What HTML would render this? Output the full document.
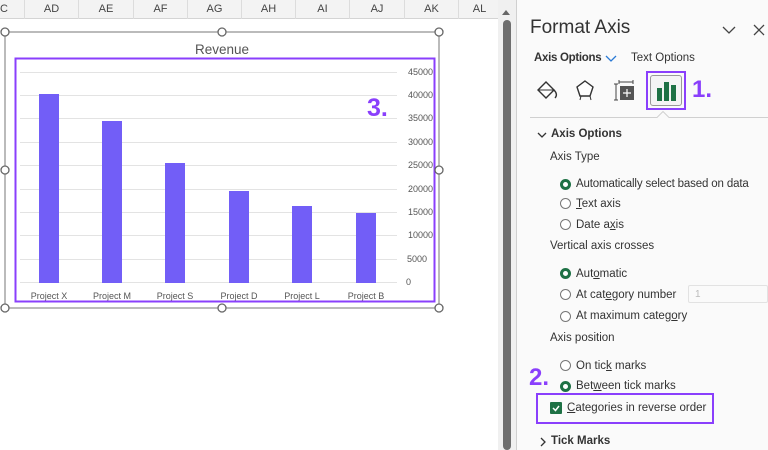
<!DOCTYPE html>
<html><head><meta charset="utf-8"><style>
*{margin:0;padding:0;box-sizing:border-box}
body{width:768px;height:450px;overflow:hidden;background:#fff;font-family:"Liberation Sans",sans-serif;position:relative}
.a{position:absolute}
.hdr{left:0;top:0;width:500px;height:19px;background:#f3f3f3;border-bottom:1px solid #d4d4d4}
.col{position:absolute;top:0;height:19px;font-size:11px;color:#444;text-align:center;line-height:19px;border-right:1px solid #dcdcdc}
.t{font-size:11.5px;color:#333;white-space:nowrap}
.rad{position:absolute;width:11px;height:11px;border-radius:50%;border:1px solid #777;background:#fff}
.rad.on{border:3px solid #1e7145}
.u{text-decoration:underline}
</style></head><body>
<div class="a hdr">
<div class="col" style="left:0;width:25px;text-align:left">C</div>
<div class="col" style="left:25px;width:54px">AD</div>
<div class="col" style="left:79px;width:55px">AE</div>
<div class="col" style="left:134px;width:54px">AF</div>
<div class="col" style="left:188px;width:54px">AG</div>
<div class="col" style="left:242px;width:54px">AH</div>
<div class="col" style="left:296px;width:54px">AI</div>
<div class="col" style="left:350px;width:55px">AJ</div>
<div class="col" style="left:405px;width:54px">AK</div>
<div class="col" style="left:459px;width:41px;border:none">AL</div>
</div>
<svg class="a" style="left:0;top:0" width="500" height="450">
<rect x="5" y="32" width="434" height="276" fill="#fff" stroke="#777" stroke-width="1"/>
<text x="222" y="54" font-size="13.5" fill="#555" text-anchor="middle" font-family="Liberation Sans">Revenue</text>
<g stroke="#e3e3e3" stroke-width="1">
<line x1="20" x2="397" y1="72.5" y2="72.5"/><line x1="20" x2="397" y1="95.5" y2="95.5"/><line x1="20" x2="397" y1="118.5" y2="118.5"/><line x1="20" x2="397" y1="142.5" y2="142.5"/><line x1="20" x2="397" y1="165.5" y2="165.5"/><line x1="20" x2="397" y1="189.5" y2="189.5"/><line x1="20" x2="397" y1="212.5" y2="212.5"/><line x1="20" x2="397" y1="235.5" y2="235.5"/><line x1="20" x2="397" y1="259.5" y2="259.5"/><line x1="20" x2="397" y1="282.5" y2="282.5"/>
</g>
<g fill="#725ef7">
<rect x="39" y="94" width="20" height="189"/><rect x="102" y="121" width="20" height="162"/><rect x="165" y="163" width="20" height="120"/><rect x="229" y="191" width="20" height="92"/><rect x="292" y="206" width="20" height="77"/><rect x="356" y="213" width="20" height="70"/>
</g>
<g font-size="9" fill="#555" font-family="Liberation Sans" text-anchor="end">
<text x="433" y="75">45000</text><text x="433" y="98">40000</text><text x="433" y="121">35000</text><text x="433" y="145">30000</text><text x="433" y="168">25000</text><text x="433" y="192">20000</text><text x="433" y="215">15000</text><text x="433" y="238">10000</text><text x="427" y="262">5000</text><text x="411" y="285">0</text>
</g>
<g font-size="9" fill="#555" font-family="Liberation Sans" text-anchor="middle">
<text x="49" y="299">Project X</text><text x="112" y="299">Project M</text><text x="175" y="299">Project S</text><text x="239" y="299">Project D</text><text x="302" y="299">Project L</text><text x="366" y="299">Project B</text>
</g>
<rect x="15.5" y="58.5" width="419" height="243" fill="none" stroke="#8a3ffc" stroke-width="2"/>
<text x="367" y="116" font-size="25" font-weight="bold" fill="#8a3ffc" font-family="Liberation Sans">3.</text>
<g fill="#fff" stroke="#666" stroke-width="1.3">
<circle cx="5" cy="32" r="4"/><circle cx="222" cy="32" r="4"/><circle cx="439" cy="32" r="4"/><circle cx="5" cy="170" r="4"/><circle cx="439" cy="170" r="4"/><circle cx="5" cy="308" r="4"/><circle cx="222" cy="308" r="4"/><circle cx="439" cy="308" r="4"/>
</g>
</svg>
<div class="a" style="left:498px;top:0;width:18px;height:450px;background:#f0f0f0"></div>
<div class="a" style="left:502px;top:10px;width:0;height:0;border-left:4px solid transparent;border-right:4px solid transparent;border-bottom:5px solid #666"></div>
<div class="a" style="left:503px;top:20px;width:8px;height:430px;background:#6e6e6e;border-radius:4px"></div>
<div class="a" style="left:516px;top:0;width:1px;height:450px;background:#d0d0d0"></div>
<div class="a" style="left:517px;top:0;width:251px;height:450px;background:#fafafa"></div>
<div class="a" style="left:530px;top:17px;font-size:19px;color:#333">Format Axis</div>
<svg class="a" style="left:720px;top:22px" width="48" height="16"><path d="M3 5l6 6 6-6" fill="none" stroke="#444" stroke-width="1.3"/><path d="M34 3l10 10M44 3l-10 10" stroke="#444" stroke-width="1.3"/></svg>
<div class="a t" style="left:534px;top:52px;font-weight:bold;letter-spacing:-0.3px">Axis Options</div>
<svg class="a" style="left:605px;top:55px" width="12" height="8"><path d="M1 1l5 5 5-5" fill="none" stroke="#2a7ad5" stroke-width="1.3"/></svg>
<div class="a t" style="left:631px;top:52px">Text Options</div>
<svg class="a" style="left:534px;top:78px" width="130" height="28">
<path d="M4 12l8-8 8 8-8 8z" fill="#fff" stroke="#333" stroke-width="1.4"/><path d="M4 12h16" stroke="#333"/><path d="M20 12c3 3 3 6 1 8" fill="none" stroke="#333" stroke-width="1.4"/>
<path d="M51 3l8 6-3 9h-10l-3-9z" fill="#fff" stroke="#333" stroke-width="1.4"/><path d="M47 18l-1 4M56 18l1 4" stroke="#333"/>
<path d="M82 6v16M80 6h4M80 22h4M85 4h14M85 2v4M99 2v4" stroke="#444" stroke-width="1"/><rect x="86" y="8" width="14" height="14" fill="#555"/><path d="M93 11v8M89 15h8" stroke="#fff" stroke-width="1.2"/>
</svg>
<div class="a" style="left:646px;top:71px;width:40px;height:39px;border:2px solid #8a3ffc"></div>
<div class="a" style="left:650px;top:75px;width:32px;height:31px;border:1px solid #999;border-radius:3px;background:#f4f4f4"></div>
<svg class="a" style="left:656px;top:80px" width="22" height="22"><rect x="1" y="8" width="5" height="13" fill="#1e7145"/><rect x="8" y="2" width="5" height="19" fill="#1e7145"/><rect x="15" y="5" width="5" height="16" fill="#1e7145"/></svg>
<div class="a" style="left:692px;top:76px;font-size:24px;font-weight:bold;color:#8a3ffc">1.</div>
<svg class="a" style="left:530px;top:110px" width="238" height="10"><path d="M0 7.5h127l6-6 6 6h99" fill="none" stroke="#d0d0d0"/></svg>
<svg class="a" style="left:537px;top:131px" width="10" height="8"><path d="M1 2l4 4 4-4" fill="none" stroke="#333" stroke-width="1.3"/></svg>
<div class="a t" style="left:551px;top:128px;font-weight:bold">Axis Options</div>
<div class="a t" style="left:550px;top:151px">Axis Type</div>
<div class="rad on" style="left:560px;top:179px"></div><div class="a t" style="left:576px;top:178px;letter-spacing:-0.15px">Automatically select based on data</div>
<div class="rad" style="left:560px;top:198px"></div><div class="a t" style="left:576px;top:198px"><span class="u">T</span>ext axis</div>
<div class="rad" style="left:560px;top:219px"></div><div class="a t" style="left:576px;top:219px">Date a<span class="u">x</span>is</div>
<div class="a t" style="left:550px;top:240px">Vertical axis crosses</div>
<div class="rad on" style="left:560px;top:268px"></div><div class="a t" style="left:576px;top:268px">Aut<span class="u">o</span>matic</div>
<div class="rad" style="left:560px;top:289px"></div><div class="a t" style="left:576px;top:289px">At cat<span class="u">e</span>gory number</div>
<div class="a" style="left:688px;top:285px;width:80px;height:18px;border:1px solid #e2e2e2;border-radius:2px;background:#fafafa;font-size:10px;color:#bbb;padding:3px 6px">1</div>
<div class="rad" style="left:560px;top:311px"></div><div class="a t" style="left:576px;top:310px">At maximum categ<span class="u">o</span>ry</div>
<div class="a t" style="left:550px;top:332px">Axis position</div>
<div class="rad" style="left:560px;top:360px"></div><div class="a t" style="left:576px;top:360px">On tic<span class="u">k</span> marks</div>
<div class="rad on" style="left:560px;top:381px"></div><div class="a t" style="left:576px;top:380px">Bet<span class="u">w</span>een tick marks</div>
<div class="a" style="left:529px;top:364px;font-size:24px;font-weight:bold;color:#8a3ffc">2.</div>
<div class="a" style="left:536px;top:393px;width:178px;height:31px;border:2px solid #8a3ffc"></div>
<div class="a" style="left:550px;top:402px;width:12px;height:12px;background:#1e7145;border-radius:1px"></div>
<svg class="a" style="left:551px;top:403px" width="10" height="10"><path d="M2 5l2.5 2.5L8 3" fill="none" stroke="#fff" stroke-width="1.5"/></svg>
<div class="a t" style="left:567px;top:402px"><span class="u">C</span>ategories in reverse order</div>
<svg class="a" style="left:539px;top:437px" width="8" height="10"><path d="M2 1l4 4-4 4" fill="none" stroke="#333" stroke-width="1.3"/></svg>
<div class="a t" style="left:551px;top:435px;font-weight:bold">Tick Marks</div>
</body></html>
